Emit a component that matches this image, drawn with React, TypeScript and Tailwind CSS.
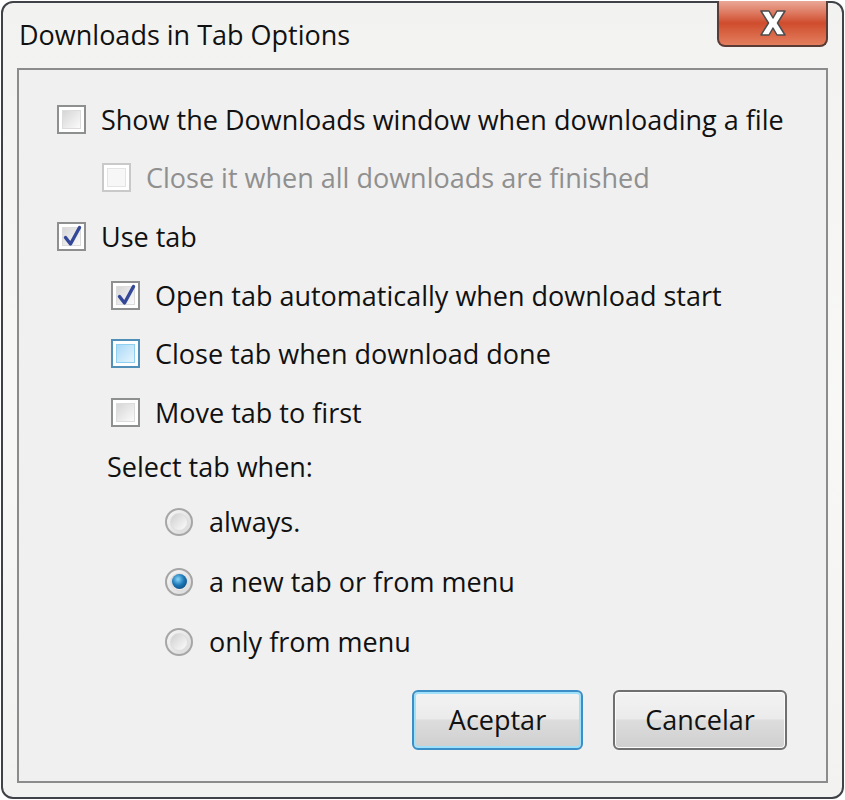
import React from 'react';

const font = { fontFamily: '"Open Sans", "Noto Sans", Arial, sans-serif' };

function CheckBox({ checked, hover, disabled }: { checked?: boolean; hover?: boolean; disabled?: boolean }) {
  const outer = disabled
    ? 'border-[#c9c9c9]'
    : hover
      ? 'border-[#4f8fb8]'
      : 'border-[#8e8f8f]';
  const inner = disabled
    ? 'bg-[#f7f7f7] border-[#e4e4e4]'
    : hover
      ? 'bg-gradient-to-br from-[#a9d9f7] to-[#e6f5fd] border-[#8fd0f0]'
      : 'bg-gradient-to-br from-[#d6d6d6] to-[#fbfbfb] border-[#dcdcdc]';
  return (
    <div className={`w-[29px] h-[29px] shrink-0 border-2 ${outer} bg-white p-[3px] flex`}>
      <div className={`relative flex-1 border ${inner} flex items-center justify-center`}>
        {checked && (
          <svg className="absolute -top-[3px] left-0" width="19" height="22" viewBox="0 0 19 22">
            <path d="M2.5 12.5 L7.5 19 L16.5 2.5" fill="none" stroke="#34489a" strokeWidth="3.4" strokeLinecap="round" strokeLinejoin="round" />
          </svg>
        )}
      </div>
    </div>
  );
}

function Radio({ checked }: { checked?: boolean }) {
  return (
    <div className="w-[28px] h-[28px] shrink-0 rounded-full border-2 border-[#a6a6a6] bg-gradient-to-br from-[#f7f7f7] to-[#d9d9d9] flex items-center justify-center">
      <div className="w-[18px] h-[18px] rounded-full bg-gradient-to-br from-[#cfcfcf] to-[#fdfdfd] border border-[#dedede] flex items-center justify-center">
        {checked && (
          <div className="w-[15px] h-[15px] rounded-full bg-[radial-gradient(circle_at_40%_35%,#8ad6f8_0%,#1c78b8_45%,#0b3566_100%)]" />
        )}
      </div>
    </div>
  );
}

function CheckRow({ label, indent, checked, hover, disabled }: { label: string; indent: string; checked?: boolean; hover?: boolean; disabled?: boolean }) {
  return (
    <div className={`h-[58.6px] flex items-center gap-[15px] ${indent}`}>
      <CheckBox checked={checked} hover={hover} disabled={disabled} />
      <span className={disabled ? 'text-[#8f8f8f]' : 'text-[#111]'}>{label}</span>
    </div>
  );
}

function RadioRow({ label, checked }: { label: string; checked?: boolean }) {
  return (
    <div className="h-[60px] flex items-center gap-[16px] pl-[108px]">
      <Radio checked={checked} />
      <span>{label}</span>
    </div>
  );
}

export default function App() {
  return (
    <div className="w-[845px] h-[800px] bg-white text-[27px] text-[#111] leading-none" style={font}>
      <div className="relative h-[798px] mx-[1px] mt-[1px] border-2 border-[#3f4246] rounded-[12px] bg-gradient-to-b from-[#f2f3f1] via-[#f8f9f7] to-[#f2f3f1] flex flex-col">
        <div className="h-[65px] pl-[16px] pt-[18px]">Downloads in Tab Options</div>

        <div className="absolute right-[14px] top-[-2px] w-[111px] h-[46px] rounded-b-[8px] border-2 border-t-0 border-[#5b3b35] bg-gradient-to-b from-[#eaa897] via-[#cf4c2c] to-[#e27e5e] flex items-center justify-center">
          <svg width="30" height="28" viewBox="0 0 30 28">
            <path d="M3 2 L11 2 L15 9 L19 2 L27 2 L19.5 14 L27 26 L19 26 L15 19 L11 26 L3 26 L10.5 14 Z" fill="#fff" stroke="#4c4c4c" strokeWidth="1.5" strokeLinejoin="round" />
          </svg>
        </div>

        <div className="flex-1 mx-[14px] mb-[14px] border-2 border-[#8c8c8c] bg-[#f0f0f0] flex flex-col pt-[20px] pl-[38px]">
          <CheckRow label="Show the Downloads window when downloading a file" indent="" />
          <CheckRow label="Close it when all downloads are finished" indent="pl-[45px]" disabled />
          <CheckRow label="Use tab" indent="" checked />
          <CheckRow label="Open tab automatically when download start" indent="pl-[54px]" checked />
          <CheckRow label="Close tab when download done" indent="pl-[54px]" hover />
          <CheckRow label="Move tab to first" indent="pl-[54px]" />
          <div className="h-[50px] flex items-center pl-[50px]">Select tab when:</div>
          <RadioRow label="always." />
          <RadioRow label="a new tab or from menu" checked />
          <RadioRow label="only from menu" />
          <div className="flex justify-end gap-[30px] pr-[39px] mt-[18px]">
            <button className="w-[171px] h-[60px] rounded-[6px] border-2 border-[#3c8fc6] shadow-[inset_0_0_0_2px_#9fe0fb] bg-[linear-gradient(#f3f3f3_0%,#ebebeb_48%,#dddddd_50%,#cfcfcf_100%)]">
              Aceptar
            </button>
            <button className="w-[174px] h-[60px] rounded-[6px] border-2 border-[#707070] shadow-[inset_0_0_0_1px_#fbfbfb] bg-[linear-gradient(#f3f3f3_0%,#ebebeb_48%,#dddddd_50%,#cfcfcf_100%)]">
              Cancelar
            </button>
          </div>
        </div>
      </div>
    </div>
  );
}
